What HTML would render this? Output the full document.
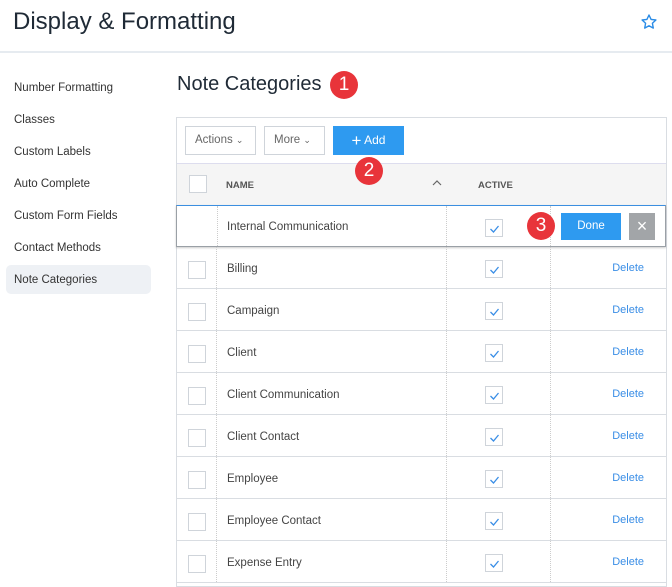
<!DOCTYPE html>
<html><head><style>
*{box-sizing:border-box;margin:0;padding:0}
body{width:672px;height:583px;overflow:hidden;background:#fff;font-family:"Liberation Sans",sans-serif;position:relative;color:#333}
.a{position:absolute}
.nav{left:14px;font-size:11.5px;color:#333}
.row{position:absolute;left:176px;width:490px;height:42px;border-bottom:1px solid #d9dde2}
.cb{position:absolute;width:18px;height:18px;border:1px solid #cfd4da;background:#fff}
.ck{position:absolute;left:309px;top:13px;width:18px;height:18px;border:1px solid #cfd4da}
.ck svg{position:absolute;left:3px;top:3px}
.nm{position:absolute;left:51px;top:16px;font-size:11.5px;color:#444}
.del{position:absolute;right:22px;top:15px;font-size:11px;color:#3a8ee6}
.vl{position:absolute;top:0;bottom:0;border-left:1px dotted #ccc}
.badge{position:absolute;width:28px;height:28px;border-radius:50%;background:#e8343a;color:#fff;font-size:19px;text-align:center;line-height:28px}
.btn{position:absolute;border:1px solid #cfd4da;font-size:11.5px;color:#666;height:29px;line-height:27px;padding-left:9px;background:#fff}
</style></head><body>
<div class="a" style="left:13px;top:8px;font-size:24px;color:#1f2a36">Display &amp; Formatting</div>
<svg class="a" style="left:640px;top:13px" width="18" height="18" viewBox="0 0 18 18"><path d="M9 2l2.1 4.4 4.8.6-3.5 3.3.9 4.8L9 12.8 4.7 15.1l.9-4.8L2.1 7l4.8-.6z" fill="none" stroke="#2b8ce6" stroke-width="1.4" stroke-linejoin="round"/></svg>
<div class="a" style="left:0;top:51px;width:672px;height:2px;background:#e6ebf0"></div>
<div class="a nav" style="top:82px">Number Formatting</div>
<div class="a nav" style="top:114px">Classes</div>
<div class="a nav" style="top:146px">Custom Labels</div>
<div class="a nav" style="top:178px">Auto Complete</div>
<div class="a nav" style="top:210px">Custom Form Fields</div>
<div class="a nav" style="top:242px">Contact Methods</div>
<div class="a" style="left:6px;top:265px;width:145px;height:29px;background:#eef1f5;border-radius:5px"></div>
<div class="a nav" style="top:274px">Note Categories</div>
<div class="a" style="left:177px;top:73px;font-size:20px;color:#1f2a36">Note Categories</div>
<div class="badge" style="left:330px;top:71px">1</div>
<div class="a" style="left:176px;top:117px;width:491px;height:470px;border:1px solid #d9dde2"></div>
<div class="btn" style="left:185px;top:126px;width:71px">Actions <span style="font-size:9px">&#8964;</span></div>
<div class="btn" style="left:264px;top:126px;width:61px">More <span style="font-size:9px">&#8964;</span></div>
<div class="a" style="left:333px;top:126px;width:71px;height:29px;background:#2e9af0;color:#fff;font-size:12px;line-height:29px;text-align:center"><span style="font-size:17px;vertical-align:-2px">+</span> Add</div>
<div class="a" style="left:177px;top:163px;width:489px;height:42px;background:#f5f5f5;border-top:1px solid #dde"></div>
<div class="cb" style="left:189px;top:175px"></div>
<div class="a" style="left:226px;top:180px;font-size:9.5px;color:#555;font-weight:bold">NAME</div>
<svg class="a" style="left:432px;top:180px" width="10" height="6"><path d="M1 5l4-4 4 4" fill="none" stroke="#666" stroke-width="1.2"/></svg>
<div class="a" style="left:478px;top:180px;font-size:9.5px;color:#555;font-weight:bold">ACTIVE</div>
<div class="badge" style="left:355px;top:157px">2</div>
<div class="row" style="top:205px;height:42px;border:1px solid #9aa0a6;border-top:1px solid #3c8fe0;box-shadow:0 1px 2px rgba(0,0,0,.2)">
<div class="vl" style="left:40px"></div><div class="vl" style="left:269px"></div><div class="vl" style="left:373px"></div>
<div class="nm" style="left:50px;top:15px">Internal Communication</div>
<div class="ck" style="top:13px;left:308px"><svg width="11" height="11"><path d="M1.5 6l3 3 5-6" fill="none" stroke="#3a8ee6" stroke-width="1.3"/></svg></div>
<div style="position:absolute;left:384px;top:7px;width:60px;height:27px;background:#2e9af0;color:#fff;font-size:11.5px;text-align:center;line-height:27px">Done</div>
<div style="position:absolute;left:452px;top:7px;width:26px;height:27px;background:#a2a5a8;color:#fff;font-size:18px;text-align:center;line-height:27px">&#215;</div>
</div>
<div class="badge" style="left:527px;top:212px">3</div>
<div id="rows"></div>
<script>
var n=["Billing","Campaign","Client","Client Communication","Client Contact","Employee","Employee Contact","Expense Entry"],h="";
n.forEach(function(t,i){h+='<div class="row" style="top:'+(247+42*i)+'px"><div class="vl" style="left:40px"></div><div class="vl" style="left:270px"></div><div class="vl" style="left:374px"></div><div class="cb" style="left:12px;top:14px"></div><div class="nm">'+t+'</div><div class="ck"><svg width="11" height="11"><path d="M1.5 6l3 3 5-6" fill="none" stroke="#3a8ee6" stroke-width="1.3"/></svg></div><div class="del">Delete</div></div>'});
document.getElementById("rows").innerHTML=h;
</script>
</body></html>
